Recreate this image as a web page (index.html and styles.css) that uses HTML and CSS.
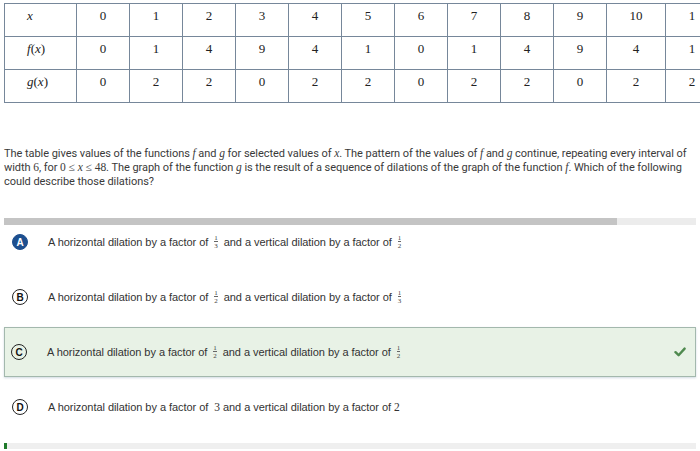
FILE: index.html
```html
<!DOCTYPE html>
<html>
<head>
<meta charset="utf-8">
<link rel="stylesheet" href="styles.css">
</head>
<body>
<div class="page">
  <table class="values">
    <colgroup>
      <col class="c-head"><col class="c"><col class="c"><col class="c"><col class="c"><col class="c"><col class="c"><col class="c"><col class="c"><col class="c"><col class="c"><col class="c-wide"><col class="c">
    </colgroup>
    <tr>
      <td class="rowhead"><i class="m">x</i></td>
      <td>0</td><td>1</td><td>2</td><td>3</td><td>4</td><td>5</td><td>6</td><td>7</td><td>8</td><td>9</td><td>10</td><td>1</td>
    </tr>
    <tr>
      <td class="rowhead"><i class="m">f</i>(<i class="m">x</i>)</td>
      <td>0</td><td>1</td><td>4</td><td>9</td><td>4</td><td>1</td><td>0</td><td>1</td><td>4</td><td>9</td><td>4</td><td>1</td>
    </tr>
    <tr>
      <td class="rowhead"><i class="m">g</i>(<i class="m">x</i>)</td>
      <td>0</td><td>2</td><td>2</td><td>0</td><td>2</td><td>2</td><td>0</td><td>2</td><td>2</td><td>0</td><td>2</td><td>2</td>
    </tr>
  </table>

  <p class="question">The table gives values of the functions <i class="m">f</i> and <i class="m">g</i> for selected values of <i class="m">x</i>. The pattern of the values of <i class="m">f</i> and <i class="m">g</i> continue, repeating every interval of width <span class="mr">6</span>, for <span class="mr">0 ≤ </span><i class="m">x</i><span class="mr"> ≤ 48</span>. The graph of the function <i class="m">g</i> is the result of a sequence of dilations of the graph of the function <i class="m">f</i>. Which of the following could describe those dilations?</p>

  <div class="progress"><div class="progress-fill"></div></div>

  <div class="options">
    <div class="option">
      <span class="badge badge-selected">A</span>
      <span class="opt-text">A horizontal dilation by a factor of <span class="frac"><span>1</span><span class="den">3</span></span> and a vertical dilation by a factor of <span class="frac"><span>1</span><span class="den">2</span></span></span>
    </div>
    <div class="option">
      <span class="badge">B</span>
      <span class="opt-text">A horizontal dilation by a factor of <span class="frac"><span>1</span><span class="den">2</span></span> and a vertical dilation by a factor of <span class="frac"><span>1</span><span class="den">3</span></span></span>
    </div>
    <div class="option option-correct">
      <span class="badge">C</span>
      <span class="opt-text">A horizontal dilation by a factor of <span class="frac"><span>1</span><span class="den">2</span></span> and a vertical dilation by a factor of <span class="frac"><span>1</span><span class="den">2</span></span></span>
      <svg class="check" width="12" height="10" viewBox="0 0 12 10"><path d="M1.5 5.2 L4.6 8.2 L10.6 1.6" fill="none" stroke="#4f8a4f" stroke-width="2.4" stroke-linecap="round" stroke-linejoin="round"/></svg>
    </div>
    <div class="option">
      <span class="badge">D</span>
      <span class="opt-text">A horizontal dilation by a factor of <span class="mr num">3</span> and a vertical dilation by a factor of <span class="mr">2</span></span>
    </div>
  </div>

  <div class="bottom-bar"><div class="bottom-fill"></div></div>
</div>
</body>
</html>
```

FILE: styles.css
```css
html, body {
  margin: 0;
  padding: 0;
  background: #ffffff;
  overflow: hidden;
}

.page {
  width: 700px;
  height: 451px;
  overflow: hidden;
  padding: 3px 4px 0 4px;
  box-sizing: border-box;
  font-family: Roboto, "Liberation Sans", sans-serif;
  color: #333;
}

.values {
  border-collapse: collapse;
  table-layout: fixed;
  width: 713px;
  font-family: "Liberation Serif", "DejaVu Serif", serif;
  font-size: 13px;
  color: #222;
}

.c-head { width: 72px; }
.c { width: 53px; }
.c-wide { width: 59px; }

.values td {
  border: 1.5px solid #76879a;
  height: 33px;
  padding: 4px 0 0 0;
  vertical-align: top;
  text-align: center;
  box-sizing: border-box;
}

.values td.rowhead {
  text-align: left;
  padding-left: 22px;
}

.m {
  font-family: "Liberation Serif", "DejaVu Serif", serif;
  font-style: italic;
}

.mr {
  font-family: "Liberation Serif", "DejaVu Serif", serif;
}

.question {
  margin: 44px 0 0 0;
  font-size: 11px;
  line-height: 14px;
  color: #3a3a3a;
  letter-spacing: -0.05px;
}

.question .m, .question .mr {
  font-size: 11.5px;
  line-height: 11px;
}

.progress {
  margin-top: 29px;
  margin-bottom: -8px;
  height: 7px;
  background: #ececec;
  width: 692px;
  position: relative;
  z-index: 1;
}

.progress-fill {
  width: 613px;
  height: 100%;
  background: #c4c4c4;
}

.options {
  display: flex;
  flex-direction: column;
  gap: 5px;
}

.option {
  height: 50px;
  display: flex;
  align-items: center;
  box-sizing: border-box;
  padding-left: 7px;
  font-family: "Liberation Sans", Arial, sans-serif;
  font-size: 11px;
  color: #333;
  border: 1px solid transparent;
}

.option-correct {
  background: #e8f2e6;
  border: 1.5px solid #a3b8ad;
  box-shadow: 0 1px 2px rgba(120, 150, 170, 0.35);
  padding-left: 6px;
}

.badge {
  width: 16px;
  height: 16px;
  border-radius: 50%;
  border: 1.4px solid #222;
  box-sizing: border-box;
  display: inline-flex;
  align-items: center;
  justify-content: center;
  font-family: "Liberation Sans", Arial, sans-serif;
  font-weight: bold;
  font-size: 10px;
  color: #111;
  flex: none;
}

.badge-selected {
  background: #1d4f8f;
  border-color: #1d4f8f;
  color: #ffffff;
}

.opt-text {
  margin-left: 20px;
  display: inline-flex;
  align-items: center;
  white-space: pre;
  letter-spacing: -0.05px;
}

.frac {
  display: inline-flex;
  flex-direction: column;
  align-items: center;
  font-family: "Liberation Serif", serif;
  font-size: 7px;
  line-height: 6px;
  margin: 0 3px;
  color: #444;
}

.frac .den {
  border-top: 0.8px solid #666;
  padding-top: 1px;
}

.option .mr {
  font-size: 11.5px;
}

.option .num {
  margin-left: 3px;
}

.check {
  margin-left: auto;
  margin-right: 9px;
}

.bottom-bar {
  margin-top: 11px;
  width: 692px;
  height: 6px;
  background: #efefef;
}

.bottom-fill {
  width: 3px;
  height: 100%;
  background: #1e7a2a;
}
```
